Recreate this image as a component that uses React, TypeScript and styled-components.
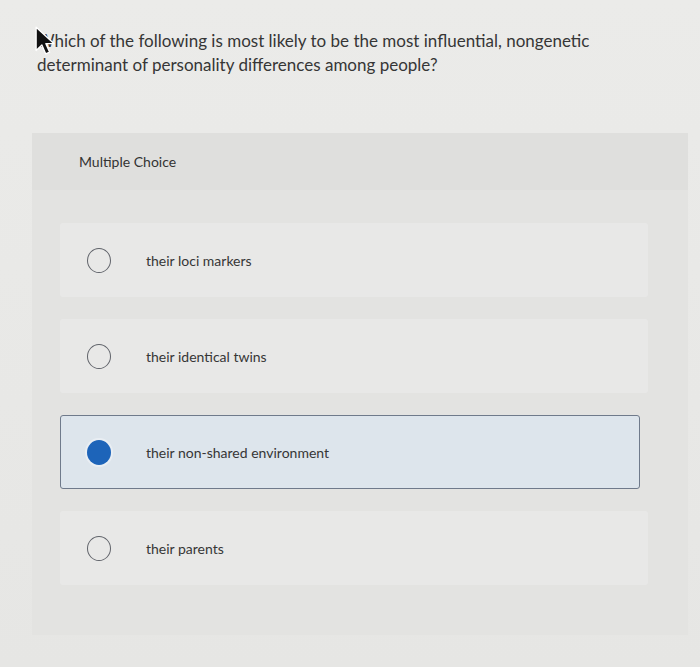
import React from 'react';
import styled, { createGlobalStyle } from 'styled-components';

const GlobalStyle = createGlobalStyle`
  html, body {
    margin: 0;
    padding: 0;
    background: #e9e9e7;
  }
  body {
    font-family: Lato, "Liberation Sans", sans-serif;
    color: #3b3b3b;
  }
`;

const Page = styled.div`
  width: 700px;
  height: 667px;
  overflow: hidden;
  background: linear-gradient(180deg, #ebebe9 0%, #e6e6e4 100%);
`;

const Question = styled.p`
  margin: 0;
  padding: 29px 60px 0 37px;
  font-size: 17px;
  line-height: 24px;
  color: #363636;
  position: relative;
`;

// mouse pointer sitting over the first letter
const Cursor = styled.svg`
  position: absolute;
  left: 35px;
  top: 26px;
  display: block;
`;

const Panel = styled.section`
  margin: 56px 12px 0 32px;
  height: 502px;
  background: #e3e3e1;
  display: flex;
  flex-direction: column;
`;

const PanelHeader = styled.div`
  height: 57px;
  display: flex;
  align-items: center;
  padding-left: 47px;
  background: #dfdfdd;
  font-size: 14px;
  color: #333;
`;

const Options = styled.div`
  display: flex;
  flex-direction: column;
  gap: 22px;
  padding: 33px 40px 0 28px;
`;

const Option = styled.div<{ $selected?: boolean }>`
  height: 74px;
  box-sizing: border-box;
  display: flex;
  align-items: center;
  padding-left: 26px;
  gap: 35px;
  background: ${p => (p.$selected ? '#dde5ec' : '#e8e8e7')};
  border: 1px solid ${p => (p.$selected ? '#6f7a8b' : 'transparent')};
  border-radius: 3px;
  ${p => p.$selected && 'margin-right: 8px;'}
  font-size: 14px;
  color: #363636;
`;

const Radio = styled.span<{ $checked?: boolean }>`
  width: 24px;
  height: 25px;
  box-sizing: border-box;
  border-radius: 50%;
  flex: none;
  border: ${p => (p.$checked ? 'none' : '1.3px solid #60636a')};
  background: ${p => (p.$checked ? '#1d64b9' : 'transparent')};
  ${p => p.$checked && 'box-shadow: 0 0 0 2px #e9eef3;'}
`;

const choices = [
  'their loci markers',
  'their identical twins',
  'their non-shared environment',
  'their parents',
];

export default function App() {
  const selected = 2;
  return (
    <Page>
      <GlobalStyle />
      <Question>
        Which of the following is most likely to be the most influential, nongenetic
        <br />
        determinant of personality differences among people?
        <Cursor width="20" height="29" viewBox="0 0 18 26">
          <path
            d="M1 1 L1 22 L6.2 17 L9.6 25 L13.2 23.5 L9.8 15.8 L17 15.8 Z"
            fill="#111"
            stroke="#fff"
            strokeWidth="1.2"
            strokeLinejoin="round"
          />
        </Cursor>
      </Question>
      <Panel>
        <PanelHeader>Multiple Choice</PanelHeader>
        <Options>
          {choices.map((c, i) => (
            <Option key={c} $selected={i === selected}>
              <Radio $checked={i === selected} />
              <span>{c}</span>
            </Option>
          ))}
        </Options>
      </Panel>
    </Page>
  );
}
